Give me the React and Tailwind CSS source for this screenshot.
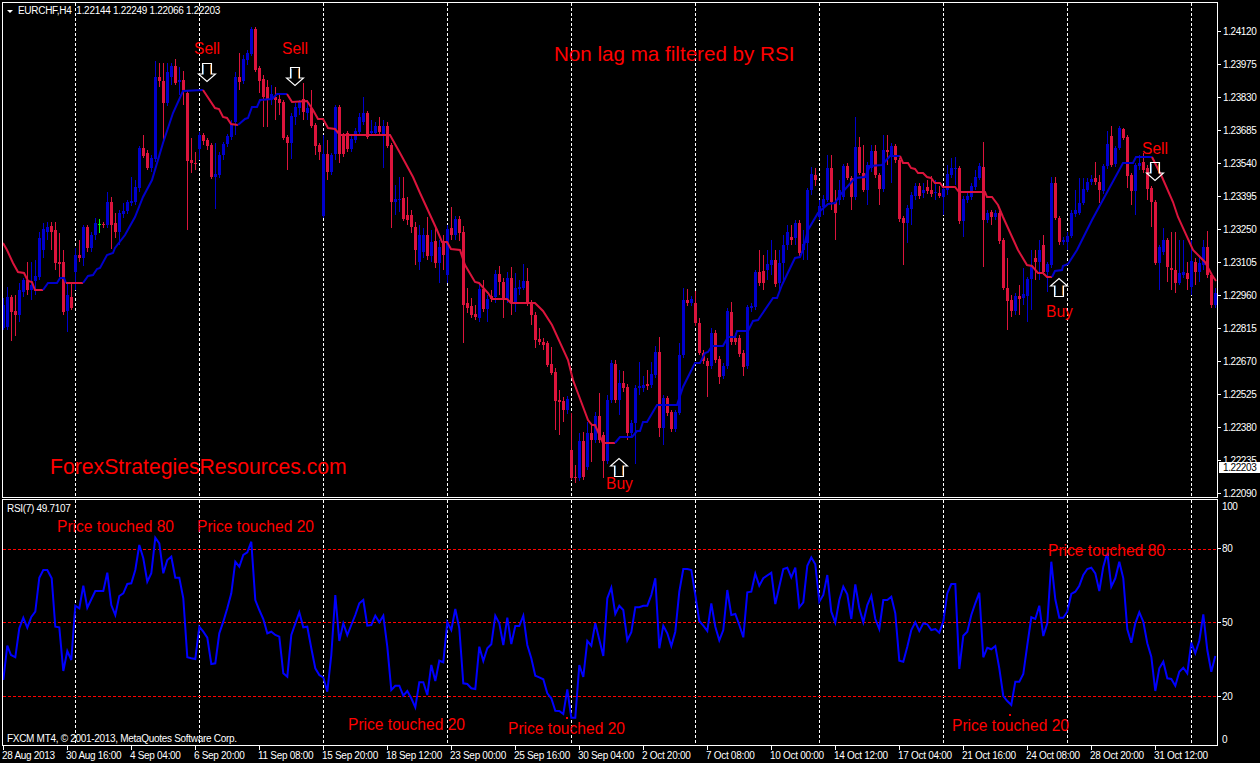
const BLUE = "#0000cd";
const RED = "#dc143c";
const GRID_X = [75.5, 199.5, 323.5, 447.5, 571.5, 695.5, 819.5, 943.5, 1067.5, 1191.5];

const PRICES = ["1.24120", "1.23975", "1.23830", "1.23685", "1.23540", "1.23395", "1.23250", "1.23105", "1.22960", "1.22815", "1.22670", "1.22525", "1.22380", "1.22235", "1.22090"];

const TIMES = ["28 Aug 2013", "30 Aug 16:00", "4 Sep 04:00", "6 Sep 20:00", "11 Sep 08:00", "15 Sep 20:00", "18 Sep 12:00", "23 Sep 00:00", "25 Sep 16:00", "30 Sep 04:00", "2 Oct 20:00", "7 Oct 08:00", "10 Oct 00:00", "14 Oct 12:00", "17 Oct 04:00", "21 Oct 16:00", "24 Oct 08:00", "28 Oct 20:00", "31 Oct 12:00"];

// candles: colour + body top, body bottom, wick top, wick bottom (pixels)
const SECTIONS = [
  [0, `b305,328,298,330 b297,327,287,330 r297,312,295,341 r311,315,295,336 b290,315,283,322 b280,292,278,297 r280,290,262,295 b285,290,262,300 b276,281,260,295 b238,277,232,280
  b229,250,223,258 b227,232,222,240 r226,232,222,250 r230,263,222,270 r262,264,233,277 r262,312,250,315 b295,311,283,332 r297,308,282,310 b255,272,248,290 r255,258,240,262
  b227,258,225,266 r227,248,225,252 b235,248,232,252 b223,235,218,240 g224,225,219,233 r224,225,222,228 b202,225,192,228 r202,225,197,249 r223,232,213,238 b213,232,210,245
  b211,214,203,218 b202,211,200,214 b201,203,177,206 b187,202,180,205 b148,188,146,192 r148,156,135,158 r153,168,150,170 b158,168,155,172 b77,159,61,162 r77,81,63,87
  r81,103,63,140 b72,103,63,106 b66,77,63,85 r66,83,59,85 b80,82,67,95 r80,90,71,105 r93,161,91,230 r160,163,138,173 r163,164,152,170 b135,149,132,160
  r135,141,133,145 r140,146,138,150 r145,177,143,179 b174,177,143,209 b155,175,152,178 b144,155,142,160 b136,144,134,147 b125,137,120,140 b77,122,72,135 r77,82,53,90
  b59,81,55,84 b53,60,50,65 b29,54,27,56 r29,70,27,72 r68,81,66,93 r79,97,75,127 r87,99,80,127 b94,99,85,105 r97,100,87,120 r99,103,95,115
  r102,138,100,140 r137,143,135,170 b116,143,113,159 b107,117,103,125 b102,108,100,115 r99,112,83,120 b108,113,100,120 r108,126,90,128 r125,146,123,155 r145,152,143,160
  b154,216,135,218 r154,172,140,180 b155,172,153,175 b107,154,105,160 r107,154,105,163 r135,154,133,157 r133,149,131,152 b139,149,135,152 b131,140,128,143 b117,132,113,135
  b113,122,97,125 r113,137,111,139 b131,133,120,136 b126,133,122,136 r126,132,117,135 b126,135,120,168 r126,146,122,148 r145,202,143,228 b199,202,185,215 b199,200,177,212
  r198,219,177,221 r215,220,197,225 r215,227,210,233 r227,250,222,265 b235,262,225,270`],
  [105, `b235,252,228,258 r235,256,217,260 b242,256,230,262 r241,263,225,268 b247,263,240,283 r242,255,235,270 b229,275,225,283 r228,235,207,240 b219,235,216,240 r219,233,216,241
  r232,305,226,343 r303,308,288,313 r306,315,298,318 r314,317,305,320 b289,318,283,322 r289,309,280,312 b299,309,295,322 r296,299,290,302 b274,297,270,303 r274,282,266,295
  r282,299,278,318 b278,300,272,303 r278,303,267,315 b288,303,273,312 b287,289,280,295 b281,288,264,290 r281,303,268,306 r303,315,300,325 r315,340,312,348 r339,342,328,345
  r342,345,338,350 r343,365,341,367 r364,373,347,375 r372,401,368,430 r400,402,390,435 r401,410,397,422 b399,410,396,414 r450,478,413,480 r477,478,465,483 b441,478,433,481
  r441,477,432,480 b433,467,422,470 r433,440,425,462 b416,440,412,443 r416,440,393,443 r435,461,432,478 b400,461,395,464 b363,400,360,403 r364,400,360,403 b383,400,370,415
  r383,388,371,392 r387,433,384,440 b423,433,420,438 b388,423,385,464 b386,388,362,395 b385,388,376,392 r384,386,370,390 b374,385,362,388 b352,375,346,378 r352,428,337,437
  b398,428,395,445 r398,413,396,416 r412,429,410,432 b412,429,410,432 b355,413,343,415 b300,355,288,358 r300,303,289,306 b299,303,296,306 r303,323,291,326 r323,353,318,355
  r353,361,350,364 r361,366,358,397 b333,366,328,369 r333,360,330,363 r359,377,356,384 b366,376,363,379 b311,366,308,369 r312,342,302,345 r338,342,333,345 r338,354,335,357
  r353,367,350,376 b307,366,305,369 b306,308,303,312 b272,307,270,310 r272,283,250,286 r271,283,255,290 b264,270,250,280 b260,265,240,275 r260,284,250,287 b263,283,250,290
  b245,263,235,280 b232,245,225,250 r237,240,225,245 b223,238,220,245 r223,253,220,256 b244,250,230,260 b190,243,188,260 b174,190,167,195 r175,180,168,186 b206,217,200,220
  b199,207,195,215 b168,200,155,202 r168,202,155,210 r202,213,190,240 b190,200,180,205`],
  [210, `b166,197,164,200 r166,178,163,180 r178,197,176,210 b147,197,117,200 r147,173,137,175 r173,190,145,192 b165,190,162,205 b151,168,145,172 r151,175,145,178 r175,189,173,205
  b150,189,135,192 r150,152,135,165 b146,157,143,183 r146,160,144,163 r160,219,158,222 r218,223,216,265 b208,223,205,243 b195,209,192,225 b186,196,183,200 r186,196,183,199
  b190,193,183,198 r187,191,180,194 r190,194,176,197 b192,193,180,200 r193,196,186,198 b189,197,186,215 b174,190,165,195 b168,175,158,178 b168,169,157,185 r168,221,166,224
  b199,221,196,237 b196,200,193,203 b186,197,183,200 b177,187,170,190 b166,178,163,180 r167,220,142,267 b213,220,210,223 r212,217,210,225 b213,217,210,220 r213,241,211,244
  r240,288,238,290 r288,301,258,330 r300,311,295,317 b296,311,293,315 r296,299,285,315 b294,298,268,305 b279,296,277,322 b267,279,250,310 r258,262,250,280 b250,262,240,280
  r245,272,235,275 b264,272,262,292 b183,265,177,268 r183,218,177,220 r218,242,216,245 b240,242,237,245 b236,242,232,250 b213,236,210,238 b210,214,190,217 b203,213,178,215
  b189,203,178,205 b182,190,178,192 b179,182,175,185 r178,182,162,185 r182,190,175,203 b166,191,164,194 b144,166,131,169 r136,165,126,167 b148,164,146,167 b128,148,126,150
  r129,138,128,140 r137,176,135,188 r175,191,173,205 b165,191,163,215 b163,166,155,170 r162,170,153,173 r168,189,165,200 r188,202,186,227 r202,263,200,265 b247,263,245,290
  b240,252,228,255 r240,267,238,282 r268,270,232,290 r270,283,232,293 b273,283,240,285 b272,275,240,278 r273,279,262,290 b261,287,240,295 r262,272,258,285 b263,272,255,282
  b247,265,240,270 r247,275,231,278 r275,305,273,308 b293,305,288,308`],
];

const CANDLES = SECTIONS.flatMap(([start, text]) =>
  text.trim().split(/\s+/).map((tok, i) => {
    const [t, b, wt, wb] = tok.slice(1).split(",").map(Number);
    const fill = tok[0] === "b" ? BLUE : tok[0] === "g" ? "#00ff00" : RED;
    return { x: 3.5 + 4 * (start + i), t, b, wt, wb, fill };
  })
);

// moving average, red and blue stretches in turn
const MA = [
  [RED, "3,243 7,250 13,263 18,272 24,273 28,281 32,282 35,290 43,290"],
  [BLUE, "43,290 48,283 57,283 60,278 64,278 66,283"],
  [RED, "66,283 83,283"],
  [BLUE, "83,283 88,276 93,275 97,269 100,268 107,255 113,253 115,248 125,235 135,217 143,197 152,180 163,143 173,113 183,91 203,90"],
  [RED, "203,90 215,108 219,109 223,117 227,118 231,124 238,125"],
  [BLUE, "238,125 245,119 248,118 252,107 257,107 260,100 272,99 277,94 287,94"],
  [RED, "287,94 292,102 307,101 313,110 318,119 323,119 328,128 335,129 340,135 390,135 400,153 413,177 420,193 437,230 442,242 447,242 451,249 460,250 465,265 475,282 479,283 488,293 492,299 507,299 511,303 535,303 543,311 552,325 568,360 573,380 588,420 592,425 595,425 603,443 615,443"],
  [BLUE, "615,443 620,437 632,437 637,431 640,431 643,422 647,422 657,405 677,405 683,387 695,363 700,363 705,353 708,352 712,346 723,346 728,337 735,337 737,331 748,331 753,321 758,320 773,298 777,298 782,285 795,258 800,257 803,250 808,230 818,213 828,204 835,203 840,195 847,187 855,178 865,177 870,166 882,165 890,156 900,156"],
  [RED, "900,156 903,163 908,163 911,168 915,169 918,173 923,173 927,177 931,178 935,183 940,183 943,187 955,187 959,192 985,192 987,197 992,197 998,205 1003,217 1018,250 1027,265 1032,266 1038,273 1043,273 1047,277 1052,277"],
  [BLUE, "1052,277 1055,271 1062,270 1063,266 1068,264 1077,250 1092,220 1123,163 1133,163 1136,157 1152,157"],
  [RED, "1152,157 1162,177 1173,202 1178,217 1193,250 1205,262 1212,275 1216,281"],
];

// rsi traced at 3x, offset back to page pixels
const rsiPart = (ox, text) =>
  text.trim().split(/\s+/).map((p) => {
    const [x, y] = p.split(",").map(Number);
    return `${(ox + x / 3).toFixed(1)},${(495 + y / 3).toFixed(1)}`;
  }).join(" ");

const RSI = [
  rsiPart(0, `10,555 22,452 33,480 46,487 58,400 70,368 82,398 94,366 106,350 118,248 130,225 142,225 155,250 166,395 178,397 190,528 202,468 214,495 226,332 238,340 250,272 262,338 286,288 310,288 322,233 334,330 346,360 358,303 370,295 382,267 394,265 406,225 418,150 430,190 442,260 454,235 466,128 478,145 490,235 502,195 514,185 526,248 538,248 550,310 562,487 574,490 586,492 598,395 610,410 622,428 634,507 646,505 658,415 670,380 682,340 694,295 706,200 718,215 730,180 742,172 754,140 766,315 778,345 790,372 802,415 814,410 826,420 838,425 850,535 862,545 874,420 898,352 910,397 922,395 934,460 946,520 958,540 970,547 982,590 994,480 1006,300 1018,438 1030,385 1042,420 1054,390 1066,360 1078,325 1090,315 1102,392 1114,390 1126,362 1138,382 1150,362 1162,455 1174,585 1186,572 1198,572 1210,602 1222,588 1234,610 1246,637 1258,562`),
  rsiPart(420, `10,562 22,600 34,510 46,558 58,497 70,502 82,382 94,405 106,342 118,400 130,565 142,567 154,580 166,582 178,455 190,498 202,460 214,448 226,362 238,385 250,450 262,368 274,447 286,393 298,393 310,362 322,450 334,490 346,542 358,547 370,553 382,595 394,610 406,647 418,648 430,657 442,583 454,668 466,668 478,510 490,546 502,438 514,452 526,385 550,483 562,310 574,278 586,357 598,332 610,345 622,436 634,412 646,337 658,337 670,332 682,332 694,300 706,250 718,460 730,392 742,415 754,453 766,410 778,290 790,222 802,222 814,225 826,300 838,378 850,392 862,408 874,325 886,395 898,436 910,405 922,285 934,360 946,357 958,390 970,427 982,292 994,290 1006,236 1018,272 1030,250 1054,233 1066,327 1090,222 1102,218 1114,247 1126,218 1138,337 1150,322 1162,212 1174,187 1186,208 1198,320 1210,300 1222,240 1234,350 1246,383 1258,315`),
  rsiPart(840, `10,275 22,298 34,372 46,268 58,340 70,382 82,330 94,302 106,372 118,402 130,315 142,315 154,305 166,355 178,497 190,500 202,455 214,405 226,382 238,408 250,385 262,388 274,405 286,402 298,413 310,380 322,295 334,267 346,267 358,522 370,422 382,410 394,360 406,325 418,293 430,487 442,458 454,463 466,453 478,520 490,603 502,618 514,630 526,560 538,560 550,537 562,450 574,367 586,372 598,332 610,423 622,385 634,200 646,313 658,368 670,368 682,350 694,297 706,290 718,272 730,240 742,222 754,218 766,235 778,288 790,215 802,173 814,275 826,250 838,200 850,250 862,403 874,443 886,385 898,352 910,380 922,445 934,485 946,588 958,520 970,500 982,550 994,552 1006,572 1018,530 1030,518 1042,535 1054,443 1066,475 1078,437 1090,358 1102,465 1114,530 1126,483`),
].join(" ");

function GridLines({ y1, y2 }) {
  return GRID_X.map((x) => (
    <line key={x} x1={x} x2={x} y1={y1} y2={y2} stroke="#fff" strokeDasharray="3 2" shapeRendering="crispEdges" />
  ));
}

function Arrow({ x, y, up }) {
  const flip = up ? `translate(${x} ${y + 19}) scale(1 -1)` : `translate(${x} ${y})`;
  return (
    <g transform={flip} fill="none">
      <path d="M5.5 1.5V11.5" stroke="#7ec8ff" strokeOpacity="0.7" />
      <path d="M12.5 1.5V11.5" stroke="#ff9a30" strokeOpacity="0.7" />
      <path d="M4.5 .5H13.5V11H17.5L9 18.5L.5 11H4.5Z" stroke="#fff" strokeWidth="1.1" />
    </g>
  );
}

function MainChart() {
  return (
    <svg className="block" width="1214" height="494" viewBox="3 3 1214 494">
      <GridLines y1={3} y2={497} />
      <polygon points="7,10 13,10 10,13" fill="#fff" />
      {CANDLES.map((c) => (
        <g key={c.x} fill={c.fill} shapeRendering="crispEdges">
          <rect x={c.x - 0.5} y={c.wt} width="1" height={c.wb - c.wt} />
          <rect x={c.x - 1.5} y={c.t} width="3" height={Math.max(c.b - c.t, 1)} />
        </g>
      ))}
      {MA.map(([color, points]) => (
        <polyline key={points} points={points} fill="none" stroke={color} strokeWidth="2" />
      ))}
      <Arrow x={198} y={63} />
      <Arrow x={286} y={67} />
      <Arrow x={1146} y={162} />
      <Arrow x={610} y={458} up />
      <Arrow x={1050} y={278} up />
    </svg>
  );
}

function RsiChart() {
  return (
    <svg className="block" width="1214" height="245" viewBox="3 500 1214 245">
      <GridLines y1={500} y2={745} />
      {[549.5, 622.5, 696.5].map((y) => (
        <line key={y} x1={3} x2={1217} y1={y} y2={y} stroke="#f00" strokeDasharray="3 2" shapeRendering="crispEdges" />
      ))}
      <polyline points={RSI} fill="none" stroke="#0000ff" strokeWidth="2" />
      <rect x="566" y="717" width="2" height="2" fill="#f00" />
      <rect x="1009" y="714" width="2" height="2" fill="#f00" />
    </svg>
  );
}

function Note({ className, children }) {
  return <span className={`absolute whitespace-nowrap text-[#f00] leading-none ${className}`}>{children}</span>;
}

function Small({ className, children }) {
  return <span className={`absolute whitespace-nowrap text-white text-[10px] leading-[11px] tracking-[-0.3px] ${className}`}>{children}</span>;
}

export default function App() {
  return (
    <div className="relative flex h-[763px] w-[1260px] flex-col overflow-hidden bg-black pl-[2px] pt-[2px] font-['Liberation_Sans',sans-serif]">
      {/* price pane */}
      <div className="flex h-[496px] shrink-0">
        <div className="relative h-full w-[1216px] shrink-0 border border-white">
          <MainChart />
          <Small className="left-[15px] top-[2px]">EURCHF,H4&nbsp;&nbsp;1.22144 1.22249 1.22066 1.22203</Small>
          <Note className="left-[551px] top-[41px] text-[20.6px]">Non lag ma filtered by RSI</Note>
          <Note className="left-[47px] top-[453px] text-[21.2px]">ForexStrategiesResources.com</Note>
          <Note className="left-[191px] top-[38px] text-[15.6px]">Sell</Note>
          <Note className="left-[279px] top-[38px] text-[15.6px]">Sell</Note>
          <Note className="left-[1139px] top-[138px] text-[15.6px]">Sell</Note>
          <Note className="left-[603px] top-[473px] text-[15.6px]">Buy</Note>
          <Note className="left-[1043px] top-[301px] text-[15.6px]">Buy</Note>
        </div>
        <div className="pt-[13px]">
          {PRICES.map((p) => (
            <div key={p} className="flex h-[33px] items-center text-[10px] tracking-[-0.4px] text-white">
              <div className="h-px w-[3px] bg-white" />
              <span className="ml-[2px]">{p}</span>
            </div>
          ))}
        </div>
      </div>

      {/* rsi pane */}
      <div className="mt-px flex h-[247px] shrink-0">
        <div className="relative h-full w-[1216px] shrink-0 border border-white">
          <RsiChart />
          <Small className="left-[4px] top-[3px]">RSI(7) 49.7107</Small>
          <Small className="left-[4px] top-[233px]">FXCM MT4, © 2001-2013, MetaQuotes Software Corp.</Small>
          <Note className="left-[54px] top-[19px] text-[15.6px]">Price touched 80</Note>
          <Note className="left-[194px] top-[19px] text-[15.6px]">Price touched 20</Note>
          <Note className="left-[345px] top-[217px] text-[15.6px]">Price touched 20</Note>
          <Note className="left-[505px] top-[221px] text-[15.6px]">Price touched 20</Note>
          <Note className="left-[949px] top-[218px] text-[15.6px]">Price touched 20</Note>
          <Note className="left-[1045px] top-[43px] text-[15.6px]">Price touched 80</Note>
        </div>
        <div className="pt-px text-[10px] tracking-[-0.4px] text-white">
          <div className="flex h-[12px] items-center pl-[4px]">100</div>
          <div className="flex h-[73px] items-center">
            <div className="h-px w-[3px] bg-white" />
            <span className="ml-px">80</span>
          </div>
          <div className="flex h-[75px] items-center">
            <div className="h-px w-[3px] bg-white" />
            <span className="ml-px">50</span>
          </div>
          <div className="flex h-[72px] items-center">
            <div className="h-px w-[3px] bg-white" />
            <span className="ml-px">20</span>
          </div>
          <div className="flex h-[14px] items-center pl-[4px]">0</div>
        </div>
      </div>

      {/* time axis */}
      <div className="flex text-[10px] leading-[11px] tracking-[-0.3px] text-white">
        {TIMES.map((t) => (
          <div key={t} className="w-[64px] shrink-0 whitespace-nowrap">
            <div className="ml-px h-[4px] w-px bg-white" />
            <div>{t}</div>
          </div>
        ))}
      </div>

      {/* last price tag */}
      <div className="absolute left-[1219px] top-[462px] h-[11px] w-[41px] bg-white pl-[4px] text-[10px] leading-[11px] tracking-[-0.4px] text-black">1.22203</div>
    </div>
  );
}
